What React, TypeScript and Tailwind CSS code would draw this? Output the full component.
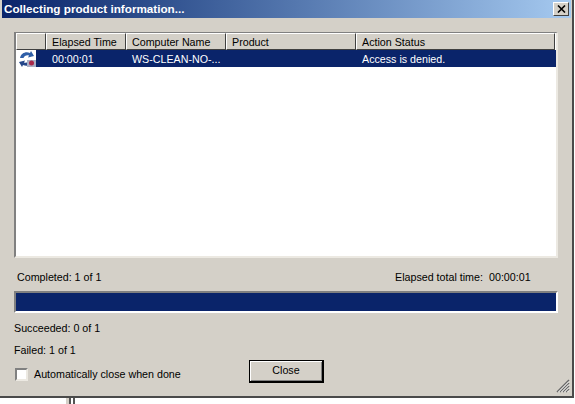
const font = { fontFamily: '"Liberation Sans", Arial, sans-serif' };

const columns = [
  { label: "", width: "w-[30px]" },
  { label: "Elapsed Time", width: "w-[80px]" },
  { label: "Computer Name", width: "w-[100px]" },
  { label: "Product", width: "w-[130px]" },
  { label: "Action Status", width: "w-[199px]" },
];

function HeaderCell({ label, width }: { label: string; width: string }) {
  return (
    <div
      className={`${width} h-[17px] shrink-0 bg-[#d4d0c8] border border-white border-r-[#404040] border-b-[#404040] pl-[5px] pt-px text-[10.7px] leading-[15px] text-black whitespace-nowrap`}
    >
      {label}
    </div>
  );
}

function RowIcon() {
  return (
    <svg width="17" height="16" viewBox="0 0 17 16" className="block">
      <path d="M1 7 C2 2 7 0 11 2 L12 0 L15 5 L9 6.5 L10 4.5 C8 3.5 5 5 4.5 7 Z" fill="#2f5fa8" />
      <path d="M14 9 C13 14 8 16 4 14 L3 16 L0 11 L6 9.5 L5 11.5 C7 12.5 10 11 10.5 9 Z" fill="#24478a" />
      <rect x="8" y="9" width="9" height="7" fill="#a9aec4" />
      <circle cx="12.5" cy="12" r="2.5" fill="#a8284a" />
    </svg>
  );
}

function ResizeGrip() {
  return (
    <svg width="14" height="14" viewBox="0 0 14 14" className="absolute right-[2px] bottom-[3px]">
      <path d="M13 1 L1 13 M13 4 L4 13 M13 7 L7 13 M13 10 L10 13" stroke="#6a6a6a" strokeWidth="1.5" />
      <path d="M13 2.5 L2.5 13 M13 5.5 L5.5 13 M13 8.5 L8.5 13 M13 11.5 L11.5 13" stroke="#ffffff" strokeWidth="0.9" />
    </svg>
  );
}

export default function App() {
  return (
    <div className="w-[575px] h-[404px] bg-white overflow-hidden relative text-[10.7px] text-black" style={font}>
      {/* Dialog window */}
      <div className="w-[574px] h-[398px] bg-[#d4d0c8] border-r-2 border-b-2 border-[#4a4a4a] relative">
        {/* Title bar */}
        <div className="ml-[2px] mr-px h-[18px] flex items-center justify-between bg-gradient-to-r from-[#0a246a] to-[#a6caf0] pl-[2px] pr-[2px]">
          <span className="text-white font-bold text-[11.7px] leading-[18px]">Collecting product information...</span>
          <button className="w-[16px] h-[14px] bg-[#d4d0c8] border border-white border-r-[#404040] border-b-[#404040] flex items-center justify-center">
            <svg width="9" height="8" viewBox="0 0 9 8">
              <path d="M1 0.5 L8 7.5 M8 0.5 L1 7.5" stroke="#000" strokeWidth="1.6" />
            </svg>
          </button>
        </div>

        <div className="px-[14px]">
          {/* List view */}
          <div className="mt-[14px] w-[544px] h-[226px] bg-white border-l-2 border-t border-r-2 border-b-2 border-[#808080] border-r-[#ece9e2] border-b-[#ece9e2] overflow-hidden">
            <div className="flex">
              {columns.map((c) => (
                <HeaderCell key={c.label} label={c.label} width={c.width} />
              ))}
            </div>
            <div className="flex h-[17px] items-center leading-[19px] whitespace-nowrap">
              <div className="w-[20px] shrink-0 pl-[3px]">
                <RowIcon />
              </div>
              <div className="flex flex-1 bg-[#0a246a] text-white h-full">
                <span className="w-[96px] shrink-0 pl-[16px]">00:00:01</span>
                <span className="w-[100px] shrink-0">WS-CLEAN-NO-...</span>
                <span className="w-[130px] shrink-0"></span>
                <span>Access is denied.</span>
              </div>
            </div>
          </div>

          {/* Totals */}
          <div className="mt-[12px] flex justify-between pl-[3px] h-[14px] leading-[14px]">
            <span>Completed: 1 of 1</span>
            <div className="flex w-[163px]">
              <span className="w-[94px]">Elapsed total time:</span>
              <span>00:00:01</span>
            </div>
          </div>

          {/* Progress bar */}
          <div className="mt-[7px] w-[544px] h-[22px] border-2 border-[#808080] border-r-white border-b-white bg-[#0a246a]" />

          <div className="mt-[8px] h-[14px] leading-[14px]">Succeeded: 0 of 1</div>
          <div className="mt-[8px] h-[14px] leading-[14px]">Failed: 1 of 1</div>

          {/* Footer */}
          <div className="mt-[2px] flex items-center h-[24px]">
            <div className="ml-px w-[13px] h-[13px] mt-[6px] bg-white border-2 border-[#808080] border-r-[#ece9e2] border-b-[#ece9e2]" />
            <span className="ml-[6px] mt-[6px] w-[215px]">Automatically close when done</span>
            <button className="w-[75px] h-[23px] bg-[#d4d0c8] border border-black border-r-2 border-b-2 shadow-[inset_1px_1px_0_#fff,inset_-1px_-1px_0_#808080]">
              Close
            </button>
          </div>
        </div>

        <ResizeGrip />
      </div>

      {/* Background window peeking out below the dialog */}
      <div className="flex ml-[66px] h-[6px]">
        <div className="w-[3px] bg-[#d4d0c8]" />
        <div className="w-[2px] bg-[#555555]" />
        <div className="w-[2px] bg-white" />
        <div className="w-[2px] bg-[#555555]" />
      </div>
    </div>
  );
}
